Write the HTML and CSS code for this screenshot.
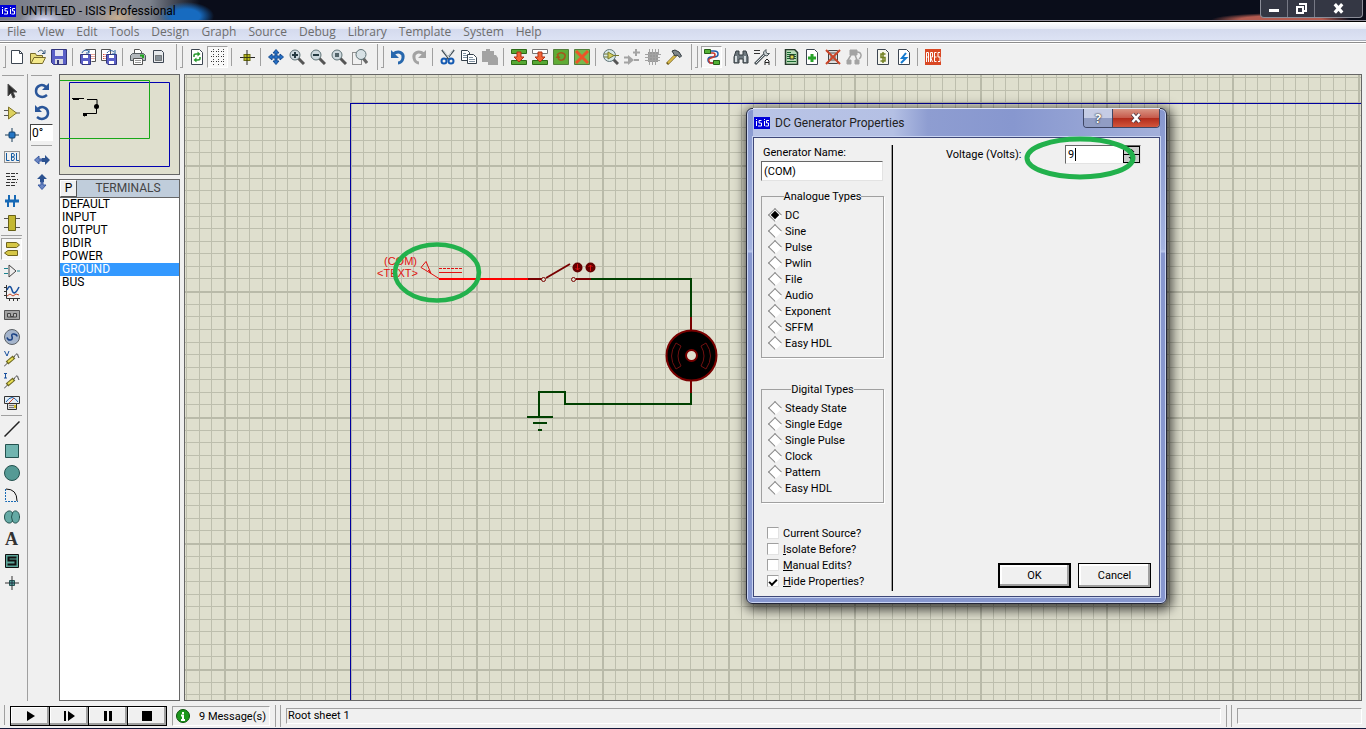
FILE: index.html
```html
<!DOCTYPE html>
<html lang="en">

<head>
    <meta charset="utf-8">
    <meta name="viewport" content="width=device-width, initial-scale=1.0">
    <title>UNTITLED - ISIS Professional</title>
    <link rel="stylesheet" href="styles.css">
</head>

<body>
    <header class="titlebar">
        <svg class="logo" viewBox="0 0 16 12"><rect width="16" height="12" fill="#0000d8"/><path d="M2.500 4v5M2.500 2v1M7.500 3.500H5v2.500h2.500v3H4M10.500 4v5M10.500 2v1M15 3.500h-2.500v2.500h2v3h-3" fill="none" stroke="#fff"/></svg>
        <h1>UNTITLED - ISIS Professional</h1>
        <div class="win-controls">
            <button aria-label="Minimize"><svg viewBox="0 0 16 12"><rect x="3" y="6" width="10" height="3" fill="#fff"/></svg></button>
            <button aria-label="Restore"><svg viewBox="0 0 16 12"><path d="M6 1h7v7h-2M4 4h6v6H4z" fill="none" stroke="#fff" stroke-width="2"/></svg></button>
            <button class="close" aria-label="Close"><svg viewBox="0 0 16 12"><path d="M4.500 2l7 8M11.500 2l-7 8" stroke="#fff" stroke-width="3"/></svg></button>
        </div>
    </header>

    <nav class="menubar">
        <button>File</button>
        <button>View</button>
        <button>Edit</button>
        <button>Tools</button>
        <button>Design</button>
        <button>Graph</button>
        <button>Source</button>
        <button>Debug</button>
        <button>Library</button>
        <button>Template</button>
        <button>System</button>
        <button>Help</button>
    </nav>

    <div class="toolbar">
        <div class="tool-group">
            <button class="tool" aria-label="New"><svg viewBox="0 0 16 16"><path d="M2.500 1.500h8l3 3v10h-11z" fill="#fff" stroke="#3d4652"/><path d="M10.500 1.500v3h3" fill="none" stroke="#3d4652"/></svg></button>
            <button class="tool" aria-label="Open"><svg viewBox="0 0 16 16"><path d="M.5 14.500v-10h5l1 2h6v3" fill="#e8dc7c" stroke="#75692a"/><path d="M1 14.500l3-6h11.500l-3 6z" fill="#f4e98b" stroke="#75692a"/><path d="M8 3c2-3 5-2 6 1m1-3v3.500h-3" fill="none" stroke="#36597c"/></svg></button>
            <button class="tool" aria-label="Save"><svg viewBox="0 0 16 16"><path d="M.5.500h15v15h-13l-2-2z" fill="#5a5fc7" stroke="#32357e"/><path d="M4 1h8v6H4z" fill="#e4e4f1"/><path d="M4 10h8v5H4z" fill="#d6d7e2"/><path d="M6 11h2v4H6z" fill="#32357e"/></svg></button>
            <span class="sep"></span>
            <button class="tool" aria-label="Import section"><svg viewBox="0 0 16 16"><path d="M5.500.500h10v12h-4" fill="#fff" stroke="#555"/><path d="M.5 5.500h10v10H2l-1.500-1.500z" fill="#5a5fc7" stroke="#32357e"/><path d="M3 6h5v3H3zM3 12h5v3H3z" fill="#fff"/><path d="M2 4c1-3 5-4 7-1m0-2v3H6" fill="none" stroke="#235ca0"/><path d="M12 5v5M14 5v5" stroke="#d34b36" stroke-dasharray="1 1"/></svg></button>
            <button class="tool" aria-label="Export section"><svg viewBox="0 0 16 16"><path d="M.5.500h9v11h-9z" fill="#fff" stroke="#555"/><path d="M5.500 5.500h10v10H7L5.500 14z" fill="#5a5fc7" stroke="#32357e"/><path d="M8 6h5v3H8zM8 12h5v3H8z" fill="#fff"/><path d="M6 4c2-3 5-3 7-1m1-2v4h-3" fill="none" stroke="#235ca0"/><path d="M2.500 5v5M4 5v5" stroke="#d34b36" stroke-dasharray="1 1"/></svg></button>
            <span class="sep"></span>
            <button class="tool" aria-label="Print"><svg viewBox="0 0 16 16"><path d="M4.500 5V.5h5l2 2V6" fill="#fff" stroke="#555"/><path d="M.5 6.500l2-2h11l2 2v5H.5z" fill="#b3b8bc" stroke="#555d62"/><path d="M3.500 9.500h9v6h-9z" fill="#fff" stroke="#555"/><path d="M10 6.500h4M12 8h2" stroke="#20a520" stroke-width="2"/><path d="M5 11.500h6M5 13.500h6" stroke="#999"/></svg></button>
            <button class="tool" aria-label="Set area"><svg viewBox="0 0 16 16"><path d="M2.500 1.500h8l2 2v10h-10z" fill="#e6e9ec" stroke="#3d4652"/><path d="M4.500 6.500h6v5h-6z" fill="#859098" stroke="#333" stroke-dasharray="1 1"/></svg></button>
        </div>
        <div class="tool-group">
            <button class="tool" aria-label="Redraw"><svg viewBox="0 0 16 16"><path d="M2.500.500h8l3 3v12h-11z" fill="#fff" stroke="#3d4652"/><path d="M5 8V6.500Q5 5 7 5h2M11 8v1.500q0 1.500-2 1.500H7" fill="none" stroke="#26992c" stroke-width="1.500"/><path d="M8.500 2.500v5L11.500 5zM7.500 8.500v5L4.500 11z" fill="#26992c"/></svg></button>
            <button class="tool pressed" aria-label="Toggle grid"><svg viewBox="0 0 16 16"><path d="M1 2.500h15M1 7.500h15M1 12.500h15" stroke="#333" stroke-dasharray="1 1 1 2"/><path d="M3.500 0v16M8.500 0v16M13.500 0v16" stroke="#444" stroke-dasharray="1 1 1 2"/></svg></button>
            <span class="sep"></span>
            <button class="tool" aria-label="Origin"><svg viewBox="0 0 16 16"><path d="M8 1v15M1 8.500h15" stroke="#262626"/><rect x="5" y="5.500" width="6" height="6" fill="#bec021" stroke="#696b12"/><path d="M8 5v7M5 8.500h6" stroke="#383912"/></svg></button>
            <span class="sep"></span>
            <button class="tool" aria-label="Pan"><svg viewBox="0 0 16 16"><path d="M8 .5l3 3.500H9v3h3V5l3.500 3-3.500 3V9H9v3h2l-3 3.500L5 12h2V9H4v2L.5 8 4 5v2h3V4H5z" fill="#246fc5" stroke="#174c91"/></svg></button>
            <button class="tool" aria-label="Zoom in"><svg viewBox="0 0 16 16"><path d="M9 9l6 6" stroke="#555" stroke-width="3"/><circle cx="6" cy="6" r="5" fill="#ced9de" stroke="#5f7377"/><path d="M3 6h6M6 3v6" stroke="#263b42" stroke-width="2"/></svg></button>
            <button class="tool" aria-label="Zoom out"><svg viewBox="0 0 16 16"><path d="M9 9l6 6" stroke="#555" stroke-width="3"/><circle cx="6" cy="6" r="5" fill="#ced9de" stroke="#5f7377"/><path d="M3 6h6" stroke="#263b42" stroke-width="2"/></svg></button>
            <button class="tool" aria-label="Zoom all"><svg viewBox="0 0 16 16"><path d="M9 9l6 6" stroke="#555" stroke-width="3"/><circle cx="6" cy="6" r="5" fill="#ced9de" stroke="#5f7377"/><path d="M4 4h4v4H4z" fill="#52646a"/></svg></button>
            <button class="tool" aria-label="Zoom area"><svg viewBox="0 0 16 16"><path d="M.5 3.500h9v12h-9z" fill="none" stroke="#333" stroke-dasharray="1 1"/><path d="M11 9l4 5" stroke="#666" stroke-width="3"/><circle cx="9" cy="5.500" r="5" fill="#d7e1e5" stroke="#5f7377"/></svg></button>
        </div>
        <div class="tool-group">
            <button class="tool" aria-label="Undo"><svg viewBox="0 0 16 16"><path d="M3 5c6-4 11-1 10 4-.5 3-3 5-5 5" fill="none" stroke="#2868ad" stroke-width="3"/><path d="M1 1v8h8z" fill="#2868ad"/></svg></button>
            <button class="tool" aria-label="Redo"><svg viewBox="0 0 16 16"><path d="M13 5C7 1 2 4 3 9c.5 3 3 5 5 5" fill="none" stroke="#a3a3a3" stroke-width="3"/><path d="M15 1v8H7z" fill="#a3a3a3"/></svg></button>
            <span class="sep"></span>
            <button class="tool" aria-label="Cut"><svg viewBox="0 0 16 16"><path d="M2 1l8 10M14 1L6 11" stroke="#445058" stroke-width="2"/><path d="M3 1l6 8M13 1L8 8" stroke="#d7dfe2"/><circle cx="4" cy="12" r="2.500" fill="none" stroke="#145ab2" stroke-width="2"/><circle cx="11" cy="12" r="2.500" fill="none" stroke="#145ab2" stroke-width="2"/></svg></button>
            <button class="tool" aria-label="Copy"><svg viewBox="0 0 16 16"><path d="M.5 1.500h6l2 2v8h-8z" fill="#fff" stroke="#35414c"/><path d="M6.500 5.500h6l3 3v6h-9z" fill="#fff" stroke="#35414c"/><path d="M2 4.500h3M2 6.500h4M2 8.500h4M8 8.500h4M8 10.500h6M8 12.500h6" stroke="#7f91a1"/></svg></button>
            <button class="tool" aria-label="Paste"><svg viewBox="0 0 16 16"><path d="M0 2h4V0h4v2h4v4h2l2 3v7H6v-3H0z" fill="#a3a3a3"/></svg></button>
            <span class="sep"></span>
            <button class="tool" aria-label="Block copy"><svg viewBox="0 0 16 16"><path d="M.5.500h15v4H.5zM.5 11.500h15v4H.5z" fill="#57a935" stroke="#2d6b18"/><path d="M6 3h4v5h3l-5 5-5-5h3z" fill="#f46435" stroke="#b23016"/></svg></button>
            <button class="tool" aria-label="Block move"><svg viewBox="0 0 16 16"><path d="M.5.500h15v4H.5z" fill="#fff" stroke="#777"/><path d="M.5 11.500h15v4H.5z" fill="#57a935" stroke="#2d6b18"/><path d="M6 3h4v5h3l-5 5-5-5h3z" fill="#f46435" stroke="#b23016"/></svg></button>
            <button class="tool" aria-label="Block rotate"><svg viewBox="0 0 16 16"><path d="M.5.500h15v15H.5z" fill="#5fab36" stroke="#527f3d"/><path d="M4 6c3-4 9-2 8 2s-6 4-7 1" fill="none" stroke="#a5561b" stroke-width="1.500"/><path d="M2.500 9h5L5 5.500z" fill="#a5561b"/></svg></button>
            <button class="tool" aria-label="Block delete"><svg viewBox="0 0 16 16"><path d="M.5.500h15v15H.5z" fill="#76b84e" stroke="#527f3d"/><path d="M2 2l12 12M14 2L2 14" stroke="#ed5527" stroke-width="3"/></svg></button>
            <span class="sep"></span>
            <button class="tool" aria-label="Pick parts"><svg viewBox="0 0 16 16"><path d="M10 10l5 5" stroke="#555" stroke-width="3"/><circle cx="6.500" cy="6.500" r="6" fill="#d6e7e7" stroke="#5f7377"/><path d="M5 3v7l6-3.500zM1 5h4M1 8h4M11 6.500h5" fill="#d6cf5c" stroke="#757930"/></svg></button>
            <button class="tool" aria-label="Make device"><svg viewBox="0 0 16 16"><path d="M4 6v10l6-5z" fill="#a3a3a3"/><path d="M0 8.500h4M0 13.500h4M10 11h5M12 0v7M9 3.500h7" stroke="#a3a3a3" stroke-width="2"/></svg></button>
            <button class="tool" aria-label="Packaging tool"><svg viewBox="0 0 16 16"><path d="M3 3h10v10H3z" fill="#999"/><path d="M4.500 0v16M7.500 0v16M10.500 0v16M13.500 0v5M0 5.500h16M0 8.500h15M0 11.500h15" stroke="#a3a3a3"/></svg></button>
            <button class="tool" aria-label="Decompose"><svg viewBox="0 0 16 16"><path d="M1 15l9-9" stroke="#6b5712" stroke-width="3"/><path d="M2 14l8-8" stroke="#d9bb4c" stroke-width="2"/><path d="M6 2l3-1 4 2 2.500 4-1.500 1.500-3-2.500-2 1z" fill="#7e868b" stroke="#333b40"/></svg></button>
        </div>
        <div class="tool-group">
            <button class="tool pressed" aria-label="Wire auto-router"><svg viewBox="0 0 16 16"><path d="M6 2h4q4 0 4 3t-4 3H7q-3 0-3 3t4 3h2" fill="none" stroke="#1d5aa7" stroke-width="1.500"/><path d="M6 4h3q2 0 2 2t-4 3-1 5h4" fill="none" stroke="#ca392c" stroke-width="1.500"/><path d="M.5.500h6v4h-6zM9.500 11.500h6v4h-6z" fill="#53b137" stroke="#246016"/></svg></button>
            <span class="sep"></span>
            <button class="tool" aria-label="Search and tag"><svg viewBox="0 0 16 16"><path d="M3 2h3v4h4V2h3l2 6v6h-5v-4H6v4H1V8z" fill="#6d777d" stroke="#343c41"/><path d="M3 7v6M12 7v6" stroke="#d6dcdf" stroke-width="2"/></svg></button>
            <button class="tool" aria-label="Property assignment"><svg viewBox="0 0 16 16"><path d="M0 1.500h6M0 4.500h6" stroke="#333"/><path d="M1 15l10-10" stroke="#4d575c" stroke-width="3"/><path d="M2 14l9-9" stroke="#dde3e5"/><path d="M12 .5L9.500 3l.5 3 3 1 2.500-2.500-2.500 0-1-1.500z" fill="#c8d0d3" stroke="#4d575c"/><path d="M11 16v-4l2-2 2 2v4M11 13.500h4" fill="none" stroke="#222"/></svg></button>
            <span class="sep"></span>
            <button class="tool" aria-label="Design explorer"><svg viewBox="0 0 16 16"><path d="M2.500.500h9l3 3v12h-12z" fill="#b7dab6" stroke="#263b2c" stroke-width="1.500"/><path d="M4 3.500h4M4 5.500h9M4 7.500h9M4 9.500h9M4 12.500h9" stroke="#17682e"/><path d="M7 6h4v4H7z" fill="#d5d94c" stroke="#222"/></svg></button>
            <button class="tool" aria-label="New sheet"><svg viewBox="0 0 16 16"><path d="M2.500.500h8l3 3v12h-11z" fill="#fff" stroke="#3d4652"/><path d="M8 5v8M4 9h8" stroke="#27a329" stroke-width="3"/></svg></button>
            <button class="tool" aria-label="Remove sheet"><svg viewBox="0 0 16 16"><path d="M3.500 1.500h9v13h-9z" fill="#ddd" stroke="#444"/><path d="M5 4h6M5 8h6M5 11h6" stroke="#555"/><path d="M1 1l14 14M15 1L1 15" stroke="#c94427" stroke-width="2"/></svg></button>
            <button class="tool" aria-label="Exit to parent"><svg viewBox="0 0 16 16"><path d="M4 1h7v5H4zM1 11h4v4H1zM9 11h4v4H9z" fill="#a3a3a3" stroke="#a3a3a3"/><path d="M5 6l-3 5M9 6l2 5M11 3c5 0 5 5 2 7" fill="none" stroke="#a3a3a3" stroke-width="1.500"/></svg></button>
            <span class="sep"></span>
            <button class="tool" aria-label="Bill of materials"><svg viewBox="0 0 16 16"><path d="M2.500.500h8l3 3v12h-11z" fill="#f5f5ec" stroke="#3d4652"/><path d="M10.500 5H6v3.500h4V12H5.500M8 3v11" fill="none" stroke="#728022" stroke-width="1.500"/></svg></button>
            <button class="tool" aria-label="Electrical rules check"><svg viewBox="0 0 16 16"><path d="M2.500.500h8l3 3v12h-11z" fill="#fff" stroke="#3d4652"/><path d="M10 4L6 9h4l-5 5" fill="none" stroke="#167bd0" stroke-width="2"/></svg></button>
            <span class="sep"></span>
            <button class="tool" aria-label="ARES"><svg viewBox="0 0 16 16"><rect width="16" height="16" fill="#d94825"/><path d="M1.500 13V3.500h2V13M1.500 8h2M5.500 13V3.500h2V8h-2l2 5M11.500 3.500h-2v9h2M9.500 8h2M15 3.500h-2V8h2v4.500h-2" fill="none" stroke="#fff"/></svg></button>
        </div>
    </div>

    <main class="main">
        <div class="side-tools">
            <button class="tool" aria-label="Selection mode"><svg viewBox="0 0 16 16"><path d="M4 1v12l3-3 2 5 2-1-2-5h4z" fill="#2c2c2c" stroke="#555"/></svg></button>
            <button class="tool" aria-label="Component mode"><svg viewBox="0 0 16 16"><path d="M0 5.500h4M0 10.500h4M12 8h4" stroke="#555"/><path d="M4.500 2v12l8-6z" fill="#ddd15f" stroke="#80752a"/></svg></button>
            <button class="tool" aria-label="Junction dot mode"><svg viewBox="0 0 16 16"><path d="M8 1v14M1 8h14" stroke="#173a58"/><rect x="5" y="5" width="6" height="6" rx="1" fill="#2375c4" stroke="#12426f"/></svg></button>
            <button class="tool" aria-label="Wire label mode"><svg viewBox="0 0 16 16"><path d="M.5 2.500h15v11H.5z" fill="none" stroke="#333" stroke-dasharray="1 1"/><path d="M2.500 4v7.500h3M7.500 4.500h2l1 1.500-1 2h-2 2l1 1.500-1 2h-2zM12.500 4v7.500H15" fill="none" stroke="#125ba2"/></svg></button>
            <button class="tool" aria-label="Text script mode"><svg viewBox="0 0 16 16"><path d="M2 2.500h12M2 5.500h9M3 8.500h11M2 11.500h11M2 14.500h9" stroke="#333" stroke-dasharray="4 1"/></svg></button>
            <button class="tool" aria-label="Buses mode"><svg viewBox="0 0 16 16"><path d="M1 8h14" stroke="#1769b5" stroke-width="3"/><path d="M5 2v6M11 2v6M4 8v6M10 8v6" stroke="#1769b5" stroke-width="2"/></svg></button>
            <button class="tool" aria-label="Subcircuit mode"><svg viewBox="0 0 16 16"><path d="M0 3.500h16M0 12.500h16" stroke="#555"/><path d="M4.500.500h7v15h-7z" fill="#c3b832" stroke="#686117"/></svg></button>
            <span class="sep"></span>
            <button class="tool pressed" aria-label="Terminals mode"><svg viewBox="0 0 16 16"><path d="M2.500 1.500h10l3 2.500-3 2.500h-10zM13.500 9.500H4L.5 12 4 14.500h9.500z" fill="#d5c646" stroke="#70651e"/></svg></button>
            <button class="tool" aria-label="Device pins mode"><svg viewBox="0 0 16 16"><path d="M0 5.500h4M0 10.500h4M13 8h3" stroke="#1b8390"/><path d="M5 2v12l7-6z" fill="#eee" stroke="#444"/></svg></button>
            <button class="tool" aria-label="Graph mode"><svg viewBox="0 0 16 16"><path d="M2.500 0v13.500H16M0 2.500h2M0 6.500h2M0 10.500h2M5.500 14v2M9.500 14v2M13.500 14v2" fill="none" stroke="#333"/><path d="M3 5q3-7 5 0t7-3" fill="none" stroke="#174f9d" stroke-width="1.500"/><path d="M3 11l3-2 3 2 3-2 3 1" fill="none" stroke="#c84b2d"/></svg></button>
            <button class="tool" aria-label="Tape recorder mode"><svg viewBox="0 0 16 16"><path d="M.5 3.500h15v9H.5z" fill="#a4a4a4" stroke="#555"/><path d="M3.500 10V6.500h3v3h3v-3h3V10z" fill="#bbb" stroke="#444"/></svg></button>
            <button class="tool" aria-label="Generator mode"><svg viewBox="0 0 16 16"><circle cx="8" cy="8" r="7.500" fill="#a5b5cc" stroke="#5b6166"/><path d="M3 8.500q1 3 3.500 2.500T8 7.500t2-2.500 3 2.500" fill="none" stroke="#173f83" stroke-width="1.500"/></svg></button>
            <button class="tool" aria-label="Voltage probe mode"><svg viewBox="0 0 16 16"><path d="M.5 0L3 5l2-5" fill="none" stroke="#174f9d"/><path d="M0 15.500l4-4M10 6c3-5 4-3 4-1l1 2" fill="none" stroke="#444"/><path d="M3 12l7-6" stroke="#6c6721" stroke-width="4"/><path d="M4 11l5-4" stroke="#e9df55" stroke-width="2"/></svg></button>
            <button class="tool" aria-label="Current probe mode"><svg viewBox="0 0 16 16"><path d="M0 .5h3M1.500 0v5M0 5h3" fill="none" stroke="#174f9d"/><path d="M0 15.500l4-4M10 6c3-5 4-3 4-1l1 2" fill="none" stroke="#444"/><path d="M3 12l7-6" stroke="#6c6721" stroke-width="4"/><path d="M4 11l5-4" stroke="#e9df55" stroke-width="2"/></svg></button>
            <button class="tool" aria-label="Instruments mode"><svg viewBox="0 0 16 16"><path d="M.5 1.500h15v7H.5z" fill="#e5eef5" stroke="#333"/><path d="M2 7q6-9 12 0" fill="none" stroke="#1a5eaa"/><path d="M5 8l5-5" stroke="#cf482b"/><path d="M3.500 8.500h9v6h-9z" fill="#ddd" stroke="#333"/><path d="M5 10.500h5M5 12.500h5" stroke="#777"/><path d="M11 10v3" stroke="#d1bd27" stroke-width="2"/></svg></button>
            <span class="sep"></span>
            <button class="tool" aria-label="2D line"><svg viewBox="0 0 16 16"><path d="M.5 15.500l15-15" stroke="#222" stroke-width="1.500"/></svg></button>
            <button class="tool" aria-label="2D box"><svg viewBox="0 0 16 16"><path d="M1.500 1.500h13v13h-13z" fill="#71b5b0" stroke="#24524f"/></svg></button>
            <button class="tool" aria-label="2D circle"><svg viewBox="0 0 16 16"><circle cx="8" cy="8" r="7.500" fill="#559a95" stroke="#24524f"/></svg></button>
            <button class="tool" aria-label="2D arc"><svg viewBox="0 0 16 16"><path d="M1.500 2v12.500H14" fill="none" stroke="#1769b5" stroke-dasharray="2 1"/><path d="M2 2q11 0 11 12" fill="none" stroke="#111"/></svg></button>
            <button class="tool" aria-label="2D path"><svg viewBox="0 0 16 16"><path d="M8.500 4c2-4 7-2 7 4s-5 8-7 4c-2 4-8 2-8-4s6-8 8-4z" fill="#65aaa5" stroke="#24524f"/><path d="M8.500 4q-2 4 0 8" fill="none" stroke="#24524f"/></svg></button>
            <button class="tool letter" aria-label="2D text">A</button>
            <button class="tool" aria-label="2D symbol"><svg viewBox="0 0 16 16"><path d="M1.500 1.500h13v13h-13z" fill="#5ca69a" stroke="#111"/><path d="M12.500 4.500h-8v3h7v4h-8" fill="none" stroke="#111" stroke-width="2"/></svg></button>
            <button class="tool" aria-label="2D marker"><svg viewBox="0 0 16 16"><path d="M8 1v14M1 8h14" stroke="#333"/><path d="M5.500 5.500h5v5h-5z" fill="#57a29c" stroke="#285652"/><path d="M8 5v6M5 8h6" stroke="#234"/></svg></button>
        </div>

        <div class="rotate-tools">
            <button class="tool" aria-label="Rotate clockwise"><svg viewBox="0 0 16 16"><path d="M12 4C8 0 2 3 2 8s6 8 11 4" fill="none" stroke="#2a569a" stroke-width="2.500"/><path d="M15 0v7H8z" fill="#2a569a"/></svg></button>
            <button class="tool" aria-label="Rotate anti-clockwise"><svg viewBox="0 0 16 16"><path d="M4 4c4-4 10-1 10 4s-6 8-11 4" fill="none" stroke="#2a569a" stroke-width="2.500"/><path d="M1 0v7h7z" fill="#2a569a"/></svg></button>
            <input class="angle" type="text" value="0°" aria-label="Rotation">
            <span class="sep"></span>
            <button class="tool" aria-label="Mirror horizontally"><svg viewBox="0 0 16 16"><path d="M.5 8L5 4v3h3v2H5v3z" fill="#6b86c4" stroke="#3a5aa0"/><path d="M16 8l-5-5v3H8v4h3v3z" fill="#2c5290"/></svg></button>
            <button class="tool" aria-label="Mirror vertically"><svg viewBox="0 0 16 16"><path d="M8 0l5 5h-3v3H6V5H3z" fill="#2c5290"/><path d="M8 15.500l4-4.500H9V8H7v3H4z" fill="#6b86c4" stroke="#3a5aa0"/></svg></button>
        </div>

        <aside class="selector">
            <svg class="overview">
                <path d="M9.500 7.500h100v84h-100z" fill="none" stroke="#0000b0"/>
                <path d="M0 5.500h89.500v58H0" fill="none" stroke="#18a818"/>
                <path d="M12 23.500h12M27 24.500h10v7M36.500 33v5.500h-12v3" fill="none" stroke="#000"/>
                <path d="M13 23h6v2h-6zM23 38h4v3h-4z"/>
                <circle cx="36.500" cy="31.500" r="2.500"/>
            </svg>
            <div class="selector-head">
                <button>P</button>
                <h2>TERMINALS</h2>
            </div>
            <ul class="terminals">
                <li>DEFAULT</li>
                <li>INPUT</li>
                <li>OUTPUT</li>
                <li>BIDIR</li>
                <li>POWER</li>
                <li class="selected">GROUND</li>
                <li>BUS</li>
            </ul>
        </aside>

        <section class="workspace">
            <svg class="sheet">
                <defs>
                    <pattern id="grid" x="39" y="90" width="126" height="126" patternUnits="userSpaceOnUse">
                        <path d="M13.500 0v126M25.500 0v126M38.500 0v126M51.500 0v126M63.500 0v126M76.500 0v126M88.500 0v126M101.500 0v126M113.500 0v126M0 13.500h126M0 25.500h126M0 38.500h126M0 51.500h126M0 63.500h126M0 76.500h126M0 88.500h126M0 101.500h126M0 113.500h126" stroke="#bdbead"/>
                        <path d="M1 0v126M0 1h126" stroke="#b9baa9" stroke-width="2"/>
                    </pattern>
                </defs>
                <rect width="100%" height="100%" fill="url(#grid)"/>
                <line x1="165.500" y1="28" x2="165.500" y2="100%" stroke="#0000a0"/>
                <line x1="165" y1="28.500" x2="100%" y2="28.500" stroke="#0000a0"/>

                <!-- circuit, drawn in window coordinates -->
                <g transform="translate(-185 -75)" fill="none">
                    <text class="net-label" x="384" y="265">(COM)</text>
                    <text class="net-label" x="377" y="277">&lt;TEXT&gt;</text>
                    <path d="M439 278.500l-8-5-10-6 5-6 5 12M431 273l-3-3" stroke="#e01010"/>
                    <path d="M439 268.500h23" stroke="#e01010" stroke-dasharray="3 1"/>
                    <path d="M439 272.500h23" stroke="#e01010"/>
                    <path d="M439 279h90" stroke="#f00" stroke-width="2"/>
                    <path d="M528 279h14M546 278l24-14M576 279h16M691 317v13M691 381v13" stroke="#780000" stroke-width="2"/>
                    <circle cx="543.500" cy="279.500" r="2" fill="#dfdfce" stroke="#780000"/>
                    <circle cx="573.500" cy="279.500" r="2" fill="#dfdfce" stroke="#780000"/>
                    <circle cx="577.500" cy="267.500" r="5" fill="#600"/>
                    <circle cx="590.500" cy="267.500" r="5" fill="#600"/>
                    <path d="M577.500 264v6M575.500 268l2 2 2-2M590.500 271v-6M588.500 267l2-2 2 2" stroke="#e01010"/>
                    <path d="M591 279h100v38M691 393v11H565v-12h-26v25M527 417h26M533 423h14M538 430h4" stroke="#004000" stroke-width="2"/>
                    <circle cx="691.500" cy="355.500" r="25" fill="#000" stroke="#780000" stroke-width="2"/>
                    <path d="M676 343q-9 13 0 26l5-3q-6-10 0-20zM706 343q9 13 0 26l-5-3q6-10 0-20z" stroke="#701010"/>
                    <circle cx="691.500" cy="355.500" r="5.500" fill="#dfdfce" stroke="#780000" stroke-width="2"/>
                    <ellipse cx="437" cy="272.500" rx="42" ry="28" stroke="#22b14c" stroke-width="4.500"/>
                </g>
            </svg>

            <form class="dialog">
                <header class="dialog-title">
                    <svg class="logo" viewBox="0 0 16 12"><rect width="16" height="12" fill="#0000d8"/><path d="M2.500 4v5M2.500 2v1M7.500 3.500H5v2.500h2.500v3H4M10.500 4v5M10.500 2v1M15 3.500h-2.500v2.500h2v3h-3" fill="none" stroke="#fff"/></svg>
                    <h2>DC Generator Properties</h2>
                    <div class="dialog-controls">
                        <button type="button">?</button>
                        <button type="button" class="close" aria-label="Close"><svg viewBox="0 0 16 12"><path d="M4.500 2l7 8M11.500 2l-7 8" stroke="#4b3a44" stroke-width="4"/><path d="M4.500 2l7 8M11.500 2l-7 8" stroke="#fff" stroke-width="2.500"/></svg></button>
                    </div>
                </header>

                <div class="dialog-body">
                    <div class="types">
                        <label class="name-label" for="gen-name">Generator Name:</label>
                        <input class="field" id="gen-name" type="text" value="(COM)">

                        <fieldset>
                            <legend>Analogue Types</legend>
                            <label><input type="radio" name="type" checked>DC</label>
                            <label><input type="radio" name="type">Sine</label>
                            <label><input type="radio" name="type">Pulse</label>
                            <label><input type="radio" name="type">Pwlin</label>
                            <label><input type="radio" name="type">File</label>
                            <label><input type="radio" name="type">Audio</label>
                            <label><input type="radio" name="type">Exponent</label>
                            <label><input type="radio" name="type">SFFM</label>
                            <label><input type="radio" name="type">Easy HDL</label>
                        </fieldset>

                        <fieldset>
                            <legend>Digital Types</legend>
                            <label><input type="radio" name="type">Steady State</label>
                            <label><input type="radio" name="type">Single Edge</label>
                            <label><input type="radio" name="type">Single Pulse</label>
                            <label><input type="radio" name="type">Clock</label>
                            <label><input type="radio" name="type">Pattern</label>
                            <label><input type="radio" name="type">Easy HDL</label>
                        </fieldset>

                        <div class="options">
                            <label><input type="checkbox">Current Source?</label>
                            <label><input type="checkbox"><span><u>I</u>solate Before?</span></label>
                            <label><input type="checkbox"><span><u>M</u>anual Edits?</span></label>
                            <label><input type="checkbox" checked><span><u>H</u>ide Properties?</span></label>
                        </div>
                    </div>

                    <div class="settings">
                        <div class="voltage">
                            <label for="voltage">Voltage (Volts):</label>
                            <div class="spinner">
                                <input id="voltage" type="text" value="9">
                                <span class="caret"></span>
                                <div class="steps">
                                    <button type="button" aria-label="Increase"><svg viewBox="0 0 15 7"><path d="M7.500 2l3 3h-6z"/></svg></button>
                                    <button type="button" aria-label="Decrease"><svg viewBox="0 0 15 7"><path d="M7.500 5l3-3h-6z"/></svg></button>
                                </div>
                                <svg class="ring" viewBox="0 0 112 44"><ellipse cx="56" cy="22" rx="53" ry="19" fill="none" stroke="#22b14c" stroke-width="5"/></svg>
                            </div>
                        </div>
                        <div class="actions">
                            <button type="button" class="default">OK</button>
                            <button type="button">Cancel</button>
                        </div>
                    </div>
                </div>
            </form>
        </section>
    </main>

    <footer class="statusbar">
        <div class="transport">
            <button aria-label="Play"><svg viewBox="0 0 16 12"><path d="M5 1l8 5-8 5z"/></svg></button>
            <button aria-label="Step"><svg viewBox="0 0 16 12"><path d="M3 1h2v10H3zM7 1l7 5-7 5z"/></svg></button>
            <button aria-label="Pause"><svg viewBox="0 0 16 12"><path d="M4 1h3v10H4zM9 1h3v10H9z"/></svg></button>
            <button aria-label="Stop"><svg viewBox="0 0 16 12"><path d="M3 1h10v10H3z"/></svg></button>
        </div>
        <div class="messages">
            <svg viewBox="0 0 14 14"><circle cx="7" cy="7" r="6.500" fill="#1c971c" stroke="#0c520c"/><path d="M7 3v2M5 6.500h2V11M5 11h4" fill="none" stroke="#fff" stroke-width="2"/></svg>
            9 Message(s)
        </div>
        <div class="status-text">Root sheet 1</div>
        <div class="status-coords"></div>
    </footer>
</body>

</html>
```
FILE: styles.css
```css
:root {
    --face: #f0f0f0;
    --shadow: #a0a0a0;
    --frame: #666666;
    --paper: #dfdfce;
    --select: #3399ff;
    --ui-font: Roboto, "Liberation Sans", sans-serif;
    --menu-font: "Open Sans", "Noto Sans", sans-serif;
}

*,
::before,
::after {
    box-sizing: border-box;
    padding: 0;
    margin: 0;
}

body {
    height: 100vh;
    display: flex;
    flex-direction: column;
    overflow: hidden;
    font: 12px/13px var(--ui-font);
    color: #000;
    background: var(--face);
    border-bottom: 1px solid #14183a;
}

button,
input {
    font: inherit;
    color: inherit;
    border: 0;
    border-radius: 0;
    background: none;
}

h1,
h2 {
    font: 12px/20px var(--ui-font);
}

svg {
    display: block;
}

.logo {
    width: 16px;
    height: 12px;
}

/* title bar */
.titlebar {
    display: flex;
    flex: none;
    height: 22px;
    align-items: center;
    gap: 5px;
    background:
        radial-gradient(ellipse 28px 14px at 186px 16px, #176bc0 50%, transparent),
        radial-gradient(ellipse 24px 12px at 118px 18px, #c8ae90, transparent),
        radial-gradient(ellipse 24px 10px at 44px 20px, #dde0ff, transparent),
        radial-gradient(ellipse 70px 7px at 1281px 20px, #b35b50 60%, transparent),
        linear-gradient(90deg, #777b88, #91929a 100px, #7b818c 150px, #0a0d1a 200px);
    border-bottom: 1px solid #000;
    box-shadow: inset 0 -1px #8f8b98;
}

.titlebar h1 {
    flex: 1;
}

.win-controls {
    display: flex;
    align-self: flex-start;
    height: 18px;
    margin-right: 3px;
    border: 1px solid #8b8d98;
    border-top: 0;
    border-radius: 0 0 4px 4px;
    background: #343744;
}

.win-controls button {
    width: 27px;
    padding: 2px 5px;
    border-right: 1px solid #777985;
}

.win-controls .close {
    width: 47px;
    padding: 2px 15px;
    border: 0;
}

/* menu */
.menubar {
    display: flex;
    flex: none;
    height: 22px;
    padding: 0 7px;
    gap: 12px;
    background: linear-gradient(#fff, #e8ebf6 7px, #d4daee 7px, #dde3f4 18px, #a9adb8 18px, #a9adb8 19px, #fff 19px, #fff 20px, #8c8c8c 20px, #8c8c8c 21px, #fff 21px);
}

.menubar button {
    height: 20px;
    font: 12px/20px var(--menu-font);
    color: #6d6d6d;
}

/* tool buttons */
.toolbar {
    display: flex;
    flex: none;
    height: 30px;
    padding-bottom: 4px;
}

.tool-group {
    display: flex;
    align-items: center;
    padding: 0 7px 0 6px;
    border-right: 1px solid var(--shadow);
    position: relative;
}

.tool-group + .tool-group {
    padding-left: 9px;
}

.tool-group:last-child {
    border: 0;
}

.tool-group::before {
    content: "";
    position: absolute;
    left: 3px;
    top: 2px;
    bottom: 2px;
    width: 3px;
    border: 1px solid var(--shadow);
    border-width: 0 1px 1px 0;
}

.tool {
    flex: none;
    width: 21px;
    height: 22px;
    display: grid;
    place-items: center;
}

.tool svg {
    width: 16px;
    height: 16px;
}

.tool.pressed {
    background: #f8f8f8;
    border: 1px solid;
    border-color: var(--shadow) #fff #fff var(--shadow);
}

.tool.letter {
    font: bold 18px/22px "Liberation Serif", serif;
    color: #333;
}

.toolbar .sep {
    width: 1px;
    height: 18px;
    margin: 0 4px 0 3px;
    background: var(--shadow);
}

/* main area */
.main {
    flex: 1;
    min-height: 0;
    display: flex;
}

.side-tools {
    display: flex;
    flex-direction: column;
    flex: none;
    width: 28px;
    padding: 6px 1px;
    border-right: 1px solid var(--shadow);
    background: linear-gradient(var(--shadow), var(--shadow)) 2px 1px / 22px 1px no-repeat;
}

.rotate-tools {
    display: flex;
    flex-direction: column;
    align-items: center;
    flex: none;
    width: 31px;
    padding: 6px 5px 0 1px;
    background: linear-gradient(var(--shadow), var(--shadow)) 3px 1px / 21px 1px no-repeat;
}

.side-tools .sep,
.rotate-tools .sep {
    flex: none;
    width: 21px;
    height: 1px;
    margin: 1px 0 2px;
    background: var(--shadow);
}

.rotate-tools .sep {
    margin: 4px 0 3px;
}

.angle {
    width: 23px;
    height: 17px;
    padding-left: 1px;
    background: #fff;
    border: 1px solid;
    border-color: #444 #fff #fff #444;
}

.selector {
    display: flex;
    flex-direction: column;
    flex: none;
    width: 121px;
    margin-right: 4px;
}

.overview {
    flex: none;
    width: 100%;
    height: 101px;
    margin-bottom: 4px;
    background: var(--paper);
    border: 1px solid var(--frame);
}

.selector-head {
    display: flex;
    flex: none;
    height: 18px;
    background: #c0cddb;
    border: 1px solid var(--frame);
    border-bottom: 0;
}

.selector-head button {
    width: 17px;
    background: var(--face);
    border: 1px solid;
    border-color: #fff #555 #555 #fff;
}

.selector-head h2 {
    flex: 1;
    line-height: 17px;
    color: #444;
    text-align: center;
}

.terminals {
    flex: 1;
    list-style: none;
    background: #fff;
    border: 1px solid var(--frame);
}

.terminals li {
    padding-left: 2px;
}

.terminals .selected {
    color: #fff;
    background: var(--select);
}

.workspace {
    flex: 1;
    min-width: 0;
    position: relative;
    margin-right: 4px;
    background: var(--paper);
    border: 1px solid var(--frame);
}

.sheet {
    position: absolute;
    width: 100%;
    height: 100%;
}

.net-label {
    font: 11px "Liberation Sans", sans-serif;
    fill: #e01010;
}

/* dialog window */
.dialog {
    position: absolute;
    left: 561px;
    top: 33px;
    width: 421px;
    padding: 0 6px 6px;
    font-size: 11px;
    background: linear-gradient(#8797cf, #a3b2df 140px, #b9c6ea 143px, #8797cf 144px);
    border: 1px solid #23263a;
    border-radius: 6px;
    box-shadow: inset 0 0 0 1px #c9d4f2, 2px 3px 12px 3px rgba(0, 0, 0, 0.7);
}

.dialog-title {
    display: flex;
    height: 28px;
    align-items: center;
    gap: 5px;
    padding-left: 1px;
    background: linear-gradient(90deg, #b9c4e6, #b4c0e4 140px, #8e9dd1 175px, #8797cf 260px, #a3b0da);
    box-shadow: 0 -1px #e2e8f8;
}

.dialog-title h2 {
    flex: 1;
    color: #222;
}

.dialog-controls {
    display: flex;
    align-self: flex-start;
    height: 19px;
    border: 1px solid #3e4665;
    border-top: 0;
    border-radius: 0 0 4px 4px;
    overflow: hidden;
}

.dialog-controls button {
    width: 28px;
    font: bold 13px/16px var(--menu-font);
    color: #fff;
    text-shadow: 0 0 2px #222, 0 0 1px #222;
    background: linear-gradient(#c5cce4 50%, #919dc4 50%);
}

.dialog-controls .close {
    width: 47px;
    padding: 2px 15px;
    border-left: 1px solid #3e4665;
    background: linear-gradient(#d99583, #c6594a 50%, #b02a1a 50%, #d2553b);
}

.dialog-body {
    display: flex;
    height: 460px;
    padding: 7px 7px 5px;
    background: var(--face);
    border: 1px solid #3f4878;
    box-shadow: 0 0 0 1px #c9d4f2;
}

.types {
    display: flex;
    flex-direction: column;
    width: 132px;
    padding-right: 9px;
    border-right: 1px solid #000;
    box-shadow: inset -1px 0 var(--shadow);
}

.name-label {
    padding: 1px 2px 0;
    margin-bottom: 2px;
}

.field {
    width: 122px;
    height: 20px;
    padding-left: 2px;
    background: #fff;
    border: 1px solid;
    border-color: var(--frame) #e3e3e3 #e3e3e3 var(--frame);
}

fieldset {
    width: 123px;
    margin-top: 9px;
    padding: 4px 6px 6px;
    border: 1px solid var(--shadow);
    box-shadow: 1px 1px #fff;
}

fieldset + fieldset {
    margin-top: 25px;
}

legend {
    margin: 0 auto;
    line-height: 13px;
}

fieldset label,
.options label {
    display: flex;
    align-items: center;
    height: 16px;
    gap: 4px;
}

input[type=radio] {
    appearance: none;
    width: 10px;
    height: 10px;
    margin: 0 1px 0 2px;
    background: #fff;
    border: 1px solid #888;
    border-right-color: #fff;
    transform: rotate(45deg);
}

input[type=radio]:checked {
    background: linear-gradient(#000, #000) center / 6px 6px no-repeat #fff;
}

.options {
    margin-top: 22px;
    padding-left: 6px;
}

input[type=checkbox] {
    appearance: none;
    display: grid;
    place-items: center;
    width: 12px;
    height: 12px;
    background: #fff;
    border: 1px solid;
    border-color: var(--shadow) #e3e3e3 #e3e3e3 var(--shadow);
}

input[type=checkbox]:checked::before {
    content: "";
    width: 8px;
    height: 5px;
    border: solid #000;
    border-width: 0 0 2px 2px;
    transform: rotate(-45deg);
}

.settings {
    display: flex;
    flex: 1;
    flex-direction: column;
    justify-content: space-between;
}

.voltage {
    display: flex;
    justify-content: space-between;
    padding: 0 11px 0 53px;
    line-height: 20px;
}

.spinner {
    display: flex;
    position: relative;
    width: 76px;
    height: 19px;
    background: #fff;
    border: 1px solid;
    border-color: var(--frame) #e3e3e3 #e3e3e3 var(--frame);
}

.spinner input {
    flex: 1;
    min-width: 0;
    padding-left: 2px;
}

.caret {
    position: absolute;
    left: 9px;
    top: 2px;
    width: 1px;
    height: 13px;
    background: #000;
}

.steps {
    display: flex;
    flex-direction: column;
    width: 17px;
    background: #000;
    gap: 1px;
    padding: 1px;
}

.steps button {
    flex: 1;
    background: #ccc;
}

.steps svg {
    height: 7px;
    width: 15px;
}

.ring {
    position: absolute;
    left: -42px;
    top: -10px;
    width: 112px;
    height: 44px;
    pointer-events: none;
}

.actions {
    display: flex;
    justify-content: flex-end;
    gap: 7px;
    padding: 0 1px 3px 0;
}

.actions button {
    width: 73px;
    height: 25px;
    background: var(--face);
    border: 1px solid #000;
    box-shadow: inset -2px -2px var(--shadow), inset 2px 2px #fff;
}

.actions .default {
    border-width: 2px;
}

/* status bar */
.statusbar {
    display: flex;
    align-items: center;
    flex: none;
    height: 27px;
    padding: 4px 4px 1px 10px;
    font-size: 11px;
    background: linear-gradient(var(--shadow), var(--shadow)) 4px 4px / 1px 20px no-repeat;
}

.transport {
    display: flex;
    height: 20px;
    padding: 1px;
    gap: 1px;
    background: #000;
}

.transport button {
    display: grid;
    place-items: center;
    width: 38px;
    background: var(--face);
    box-shadow: inset -2px -2px var(--shadow), inset 1px 1px #fff;
}

.transport svg {
    width: 16px;
    height: 12px;
}

.messages {
    display: flex;
    align-items: center;
    gap: 9px;
    width: 98px;
    height: 20px;
    margin-left: 5px;
    padding-left: 3px;
    border: 1px solid;
    border-color: var(--shadow) #fff #fff var(--shadow);
}

.messages svg {
    width: 14px;
    height: 14px;
}

.status-text,
.status-coords {
    position: relative;
    height: 16px;
    margin-left: 16px;
    padding-left: 1px;
    border: 1px solid;
    border-color: var(--shadow) #fff #fff var(--shadow);
}

.status-text {
    flex: 1;
}

.status-coords {
    width: 125px;
}

/* divider and grip ahead of each status field */
.status-text::before,
.status-coords::before {
    content: "";
    position: absolute;
    left: -12px;
    top: -4px;
    width: 6px;
    height: 22px;
    border: solid var(--shadow);
    border-width: 0 1px;
}
```
